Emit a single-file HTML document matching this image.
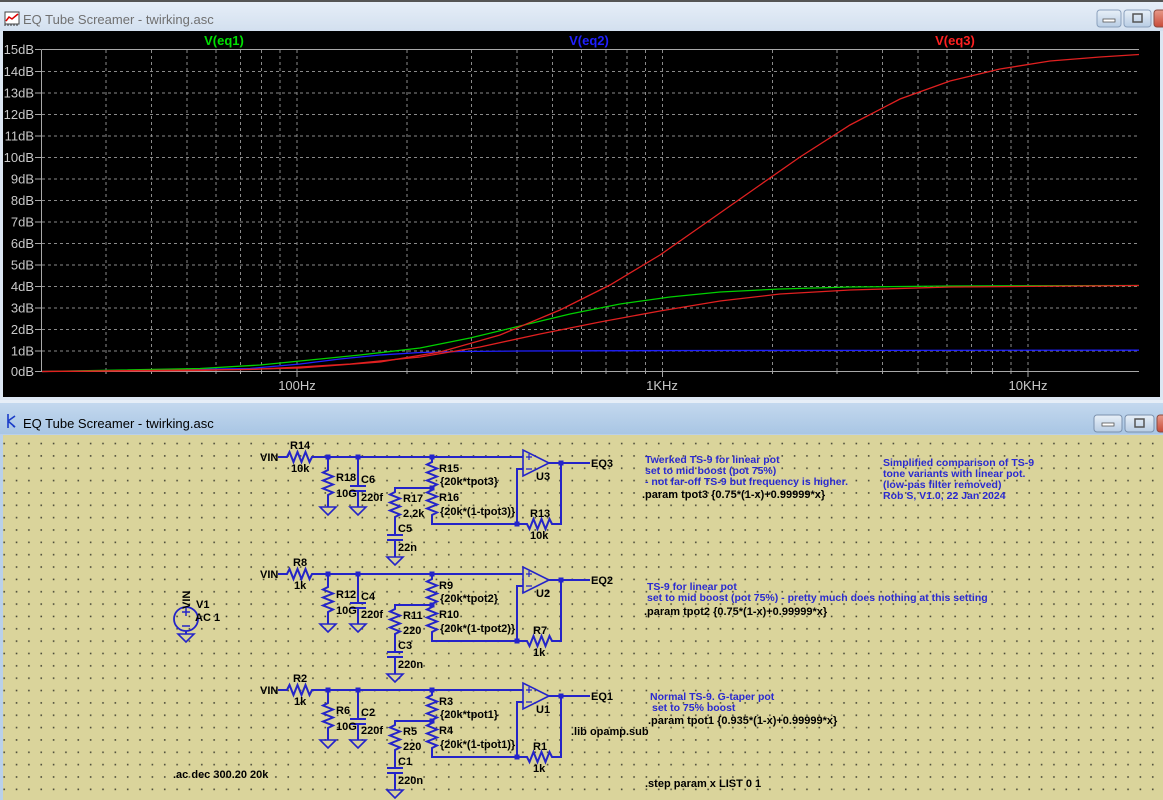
<!DOCTYPE html>
<html><head><meta charset="utf-8"><style>
html,body{margin:0;padding:0;width:1163px;height:800px;overflow:hidden;background:#dce6f2}
svg{display:block}
.t{font-family:"Liberation Sans",Arial,sans-serif}
.lb{font-family:"Liberation Sans",Arial,sans-serif;font-size:11px;font-weight:bold;fill:#000}
.cm{font-family:"Liberation Sans",Arial,sans-serif;font-size:10.5px;font-weight:bold;fill:#2a2ad0}
.ax{font-family:"Liberation Sans",Arial,sans-serif;font-size:13px;fill:#c8c8c8}
.w{fill:none;stroke:#2424c8;stroke-width:2}
</style></head><body>
<svg width="1163" height="800" viewBox="0 0 1163 800" xmlns="http://www.w3.org/2000/svg">
<defs>
<linearGradient id="tb1" x1="0" y1="0" x2="0" y2="1"><stop offset="0" stop-color="#e6eef8"/><stop offset="1" stop-color="#d3e0ef"/></linearGradient>
<linearGradient id="tb2" x1="0" y1="0" x2="0" y2="1"><stop offset="0" stop-color="#c3d8ee"/><stop offset="1" stop-color="#a9c6e4"/></linearGradient>
<linearGradient id="btn" x1="0" y1="0" x2="0" y2="1"><stop offset="0" stop-color="#e8f0f8"/><stop offset="1" stop-color="#b8cde4"/></linearGradient>
<linearGradient id="cls" x1="0" y1="0" x2="0" y2="1"><stop offset="0" stop-color="#e89a8a"/><stop offset="1" stop-color="#c74a38"/></linearGradient>
<pattern id="dots" patternUnits="userSpaceOnUse" width="12.35" height="12.35"><rect x="3.4" y="10.5" width="1.6" height="1.6" fill="#4a4a38"/></pattern>
<g id="gnd"><path d="M-8 0 H8 L0 8 Z" fill="none" stroke="#2424c8" stroke-width="1.6"/></g>
<g id="blk">
<path class="w" d="M278 457 H287 l2.5 -5 l4 10 l4 -10 l4 10 l4 -10 l4 10 l2.5 -5 H523"/>
<path class="w" d="M328 457 V470 l-5 2.5 l10 4 l-10 4 l10 4 l-10 4 l10 4 l-5 2.5 V507"/>
<path class="w" d="M358 457 V486 M350 486 H366 M350 491 H366 M358 491 V507"/>
<path class="w" d="M432 457 V462 l-5 2.5 l10 4 l-10 4 l10 4 l-10 4 l10 4 l-5 2.5 V490 l-5 2.5 l10 4 l-10 4 l10 4 l-10 4 l10 4 l-5 2.5 V524 H517 V469 H523"/>
<path class="w" d="M432 488 H395 V492 l-5 2.5 l10 4 l-10 4 l10 4 l-10 4 l10 4 l-5 2.5 V535 M387 535 H403 M387 540 H403 M395 540 V557"/>
<path d="M523 450 V476 L549 463 Z" fill="none" stroke="#2424c8" stroke-width="1.6"/>
<path d="M526 457 h6 M529 454 v6 M526 469 h6" stroke="#2424c8" stroke-width="1.2"/>
<path class="w" d="M549 463 H590 M561 463 V524 H552 l-2.5 -5 l-4 10 l-4 -10 l-4 10 l-4 -10 l-4 10 l-2.5 -5 H517"/>
<use href="#gnd" x="328" y="507"/><use href="#gnd" x="358" y="507"/><use href="#gnd" x="395" y="557"/>
<g fill="#2424c8"><rect x="325.5" y="454.5" width="5" height="5"/><rect x="355.5" y="454.5" width="5" height="5"/><rect x="429.5" y="454.5" width="5" height="5"/><rect x="429.5" y="485.5" width="5" height="5"/><rect x="514.5" y="521.5" width="5" height="5"/><rect x="558.5" y="460.5" width="5" height="5"/></g>
</g>
</defs>

<rect x="0" y="0" width="1163" height="400" fill="#dce6f2"/>
<rect x="0" y="0" width="1163" height="2" fill="#555"/>
<rect x="0" y="2" width="1163" height="29" fill="url(#tb1)"/>
<g transform="translate(5,12)"><rect x="0" y="0" width="14" height="12" fill="#fff" stroke="#444" stroke-width="1"/><path d="M1 9 L4 5 L7 7 L13 2" stroke="#d00" stroke-width="1.5" fill="none"/><path d="M0 12 v2 M3 12 v2 M6 12 v2 M9 12 v2 M12 12 v2" stroke="#333"/></g>
<text x="23" y="24" class="t" font-size="13" fill="#707070">EQ Tube Screamer - twirking.asc</text>
<rect x="1097" y="10" width="24" height="17" rx="3" fill="url(#btn)" stroke="#8aa0bc"/><rect x="1103" y="19" width="12" height="3" fill="#fff" stroke="#555" stroke-width=".8"/>
<rect x="1124" y="10" width="27" height="17" rx="3" fill="url(#btn)" stroke="#8aa0bc"/><rect x="1133" y="14" width="9" height="8" fill="none" stroke="#555" stroke-width="1.5"/>
<rect x="1154" y="10" width="14" height="17" rx="3" fill="url(#cls)" stroke="#8a4a40"/>
<rect x="3" y="31" width="1157" height="366" fill="#000"/>
<g stroke="#8a8a8a" stroke-width="1" stroke-dasharray="3,3">
<path d="M42 71.5H1138 M42 93H1138 M42 114.5H1138 M42 136H1138 M42 157.5H1138 M42 179H1138 M42 200.5H1138 M42 222H1138 M42 243.5H1138 M42 265H1138 M42 286.5H1138 M42 308H1138 M42 329.5H1138 M42 351H1138"/>
<path d="M106 50V371 M151.5 50V371 M187 50V371 M216 50V371 M240.5 50V371 M261.5 50V371 M280 50V371 M297 50V371 M407 50V371 M471.5 50V371 M517 50V371 M552.5 50V371 M581.5 50V371 M606 50V371 M627 50V371 M645.5 50V371 M662.5 50V371 M772.5 50V371 M837 50V371 M882.5 50V371 M918 50V371 M947 50V371 M971.5 50V371 M992.5 50V371 M1011 50V371 M1028 50V371"/>
</g>
<path d="M41.5 49.5 H1139 M41.5 49.5 V371.5 H1139" stroke="#a8a8a8" stroke-width="1" fill="none"/>
<g stroke="#a8a8a8"><path d="M35 49.5h6 M35 71.5h6 M35 93h6 M35 114.5h6 M35 136h6 M35 157.5h6 M35 179h6 M35 200.5h6 M35 222h6 M35 243.5h6 M35 265h6 M35 286.5h6 M35 308h6 M35 329.5h6 M35 351h6 M35 371.5h6"/>
<path d="M297 371v6 M662.5 371v6 M1028 371v6 M106 371v3 M151.5 371v3 M187 371v3 M216 371v3 M240.5 371v3 M261.5 371v3 M280 371v3 M407 371v3 M471.5 371v3 M517 371v3 M552.5 371v3 M581.5 371v3 M606 371v3 M627 371v3 M645.5 371v3 M772.5 371v3 M837 371v3 M882.5 371v3 M918 371v3 M947 371v3 M971.5 371v3 M992.5 371v3 M1011 371v3"/></g>
<g class="ax" text-anchor="end">
<text x="34" y="54">15dB</text><text x="34" y="76">14dB</text><text x="34" y="97.5">13dB</text><text x="34" y="119">12dB</text><text x="34" y="140.5">11dB</text><text x="34" y="162">10dB</text><text x="34" y="183.5">9dB</text><text x="34" y="205">8dB</text><text x="34" y="226.5">7dB</text><text x="34" y="248">6dB</text><text x="34" y="269.5">5dB</text><text x="34" y="291">4dB</text><text x="34" y="312.5">3dB</text><text x="34" y="334">2dB</text><text x="34" y="355.5">1dB</text><text x="34" y="376">0dB</text>
</g>
<g class="ax" text-anchor="middle"><text x="297" y="390">100Hz</text><text x="662" y="390">1KHz</text><text x="1028" y="390">10KHz</text></g>
<g class="t" font-size="13" font-weight="bold" text-anchor="middle"><text x="224" y="45" fill="#00e000">V(eq1)</text><text x="589" y="45" fill="#2020ff">V(eq2)</text><text x="955" y="45" fill="#ff2020">V(eq3)</text></g>
<g fill="none" stroke-width="1.3">
<path stroke="#2020ff" d="M42 371.5 L250 368.5 L300 364 L340 359 L380 355 L420 352.5 L460 351.5 L520 351 L700 350.5 L1139 350.2"/>
<path stroke="#00d000" d="M42 371.5 L200 368.5 L260 365 L300 361 L360 355 L420 348 L470 338 L520 326 L570 314 L620 304 L670 297 L720 292 L780 289 L850 287 L950 286 L1139 285.5"/>
<path stroke="#e02020" d="M42 371.5 L250 369.5 L300 367 L350 364 L420 357 L480 347 L540 334 L600 322 L660 311 L720 301 L780 294 L850 290 L950 287 L1139 285.5"/>
<path stroke="#e02020" d="M42 371.5 L200 370.5 L300 368 L380 362 L440 352 L500 335 L560 310 L610 285 L660 255 L710 220 L760 185 L800 157 L850 125 L900 99 L950 81 L1000 69 L1050 61 L1100 57 L1139 54.5"/>
</g>

<rect x="0" y="400" width="1163" height="400" fill="#b9d0ea"/>
<rect x="0" y="400" width="1163" height="3" fill="#e6eef7"/>
<rect x="0" y="403" width="1163" height="31" fill="url(#tb2)"/>
<g transform="translate(5,414)" stroke="#1a3cc8" stroke-width="1.6" fill="none"><path d="M3 0 v14 M3 7 L10 2 M3 7 L10 13 L8 12"/></g>
<text x="23" y="428" class="t" font-size="13" fill="#000">EQ Tube Screamer - twirking.asc</text>
<rect x="1094" y="415" width="28" height="17" rx="3" fill="url(#btn)" stroke="#7a90ac"/><rect x="1102" y="423" width="12" height="3" fill="#fff" stroke="#555" stroke-width=".8"/>
<rect x="1125" y="415" width="29" height="17" rx="3" fill="url(#btn)" stroke="#7a90ac"/><rect x="1135" y="419" width="9" height="8" fill="none" stroke="#555" stroke-width="1.5"/>
<rect x="1157" y="415" width="12" height="17" rx="3" fill="url(#cls)" stroke="#8a4a40"/>
<rect x="3" y="435" width="1160" height="365" fill="#dad49b"/>
<rect x="3" y="435" width="1160" height="365" fill="url(#dots)"/>

<use href="#blk"/>
<use href="#blk" y="117"/>
<use href="#blk" y="233"/>

<circle cx="186" cy="619" r="12" fill="none" stroke="#2424c8" stroke-width="1.8"/>
<path d="M182 612 h8 M186 608 v8 M182 626 h8" stroke="#2424c8" stroke-width="1.5"/>
<path class="w" d="M186 631 V634"/>
<use href="#gnd" x="186" y="634"/>
<text class="lb" transform="translate(190,609) rotate(-90)">VIN</text>
<text class="lb" x="196" y="608">V1</text>
<text class="lb" x="195" y="621">AC 1</text>

<g class="lb">
<text x="260" y="461">VIN</text><text x="290" y="449">R14</text><text x="291" y="472">10k</text>
<text x="336" y="481">R18</text><text x="336" y="497">10G</text><text x="361" y="483">C6</text><text x="361" y="501">220f</text>
<text x="439" y="472">R15</text><text x="440" y="485">{20k*tpot3}</text>
<text x="403" y="502">R17</text><text x="403" y="517">2.2k</text>
<text x="439" y="501">R16</text><text x="440" y="515">{20k*(1-tpot3)}</text>
<text x="398" y="532">C5</text><text x="398" y="551">22n</text>
<text x="536" y="480">U3</text><text x="530" y="517">R13</text><text x="530" y="539">10k</text><text x="591" y="467">EQ3</text>

<text x="260" y="578">VIN</text><text x="293" y="566">R8</text><text x="294" y="589">1k</text>
<text x="336" y="598">R12</text><text x="336" y="614">10G</text><text x="361" y="600">C4</text><text x="361" y="618">220f</text>
<text x="439" y="589">R9</text><text x="440" y="602">{20k*tpot2}</text>
<text x="403" y="619">R11</text><text x="403" y="634">220</text>
<text x="439" y="618">R10</text><text x="440" y="632">{20k*(1-tpot2)}</text>
<text x="398" y="649">C3</text><text x="398" y="668">220n</text>
<text x="536" y="597">U2</text><text x="533" y="634">R7</text><text x="533" y="656">1k</text><text x="591" y="584">EQ2</text>

<text x="260" y="694">VIN</text><text x="293" y="682">R2</text><text x="294" y="705">1k</text>
<text x="336" y="714">R6</text><text x="336" y="730">10G</text><text x="361" y="716">C2</text><text x="361" y="734">220f</text>
<text x="439" y="705">R3</text><text x="440" y="718">{20k*tpot1}</text>
<text x="403" y="735">R5</text><text x="403" y="750">220</text>
<text x="439" y="734">R4</text><text x="440" y="748">{20k*(1-tpot1)}</text>
<text x="398" y="765">C1</text><text x="398" y="784">220n</text>
<text x="536" y="713">U1</text><text x="533" y="750">R1</text><text x="533" y="772">1k</text><text x="591" y="700">EQ1</text>

<text x="642" y="498">.param tpot3 {0.75*(1-x)+0.99999*x}</text>
<text x="644" y="615">.param tpot2 {0.75*(1-x)+0.99999*x}</text>
<text x="648" y="724">.param tpot1  {0.935*(1-x)+0.99999*x}</text>
<text x="571" y="735">.lib opamp.sub</text>
<text x="173" y="778">.ac dec 300.20 20k</text>
<text x="645" y="787">.step param x LIST 0 1</text>
</g>
<g class="cm">
<text x="645" y="463">Twerked TS-9 for linear pot</text>
<text x="645" y="474">set to mid boost (pot 75%)</text>
<text x="645" y="485">- not far-off TS-9 but frequency is higher.</text>
<text x="883" y="466">Simplified comparison of TS-9</text>
<text x="883" y="477">tone variants with linear pot.</text>
<text x="883" y="488">(low-pas filter removed)</text>
<text x="883" y="499">Rob S, V1.0, 22 Jan 2024</text>
<text x="647" y="590">TS-9 for linear pot</text>
<text x="647" y="601">set to mid boost (pot 75%)  - pretty much does nothing at this setting</text>
<text x="650" y="700">Normal TS-9.  G-taper pot</text>
<text x="652" y="711"> set to 75% boost</text>
</g>
</svg>
</body></html>
